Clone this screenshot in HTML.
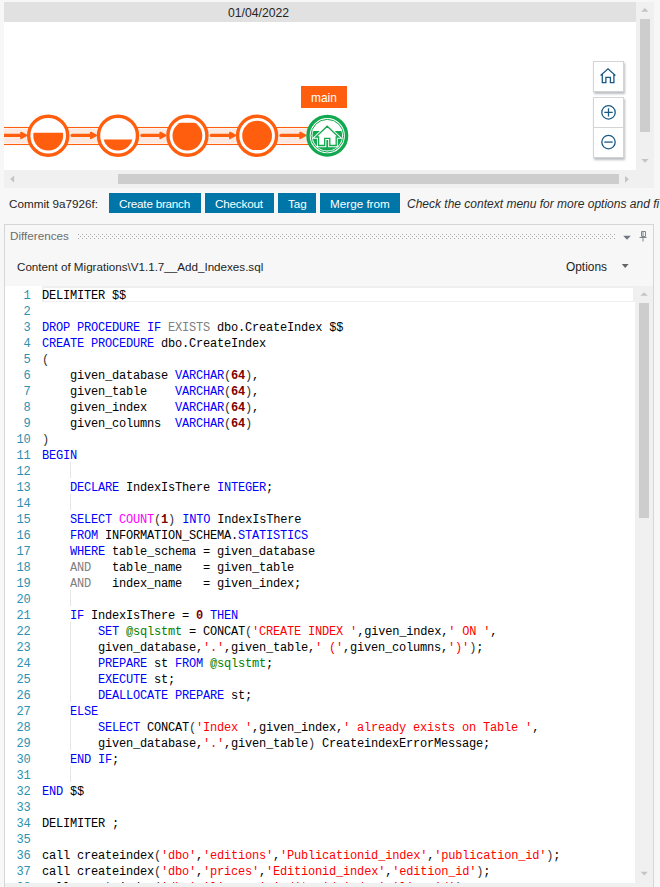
<!DOCTYPE html>
<html><head><meta charset="utf-8">
<style>
*{margin:0;padding:0;box-sizing:border-box}
html,body{width:660px;height:887px;overflow:hidden;background:#f7f7f7;position:relative;font-family:"Liberation Sans",sans-serif;color:#1e1e1e}
.a{position:absolute}
.t{position:absolute;white-space:pre;line-height:1}
#datebar{left:4px;top:2px;width:632px;height:20px;background:#e1e1e1}
#graph{left:4px;top:22px;width:632px;height:148px;background:#fff;overflow:hidden}
#vs1{left:636px;top:2px;width:18px;height:186px;background:#f0f0f0}
#hs1{left:4px;top:170px;width:632px;height:18px;background:#f0f0f0}
.thumb{position:absolute;background:#cdcdcd}
.btn{position:absolute;top:193px;height:20px;background:#0076a8;color:#fff}
.btn span{position:absolute;white-space:pre;line-height:1;font-size:11.6px}
#panel{left:4px;top:224px;width:650px;height:680px;border:1px solid #d6d6d6;background:#f7f7f7}
#code{left:5px;top:286px;width:630px;height:597px;background:#fff;overflow:hidden}
#vs2{left:635px;top:286px;width:18px;height:597px;background:#f0f0f0}
#hs2{left:5px;top:883px;width:648px;height:10px;background:#f0f0f0}
.ln{position:absolute;top:1.5px;left:0;width:25.5px;text-align:right;font-family:"Liberation Mono",monospace;font-size:12px;letter-spacing:-0.2px;color:#2b91af;white-space:pre}
.cl{position:absolute;top:1.5px;left:37px;font-family:"Liberation Mono",monospace;font-size:12px;letter-spacing:-0.2px;color:#000;white-space:pre}
.k{color:#0000ff}.g{color:#808080}.m{color:#ff00ff}.n{color:#800000;font-weight:bold}.s{color:#ff0000}.v{color:#008000}.p{color:#333}
.row{position:absolute;left:0;height:16px;width:629px;line-height:16px}
b{font-weight:normal}
.guide{position:absolute;left:65px;width:1px;background:#e6e6e6}
</style></head><body>
<div id="datebar" class="a"><div class="t" style="left:224px;top:5px;font-size:12.2px;color:#262626">01/04/2022</div></div>
<div id="graph" class="a"></div>
<!--GRAPH-->
<svg class="a" style="left:0;top:0" width="660" height="190" viewBox="0 0 660 190">
<defs><clipPath id="gc"><rect x="4" y="22" width="632" height="148"/></clipPath></defs>
<g clip-path="url(#gc)">
<rect x="3" y="127.5" width="325" height="17" fill="#fde9df" stroke="#ff5e0e" stroke-width="1.1"/>
<rect x="3" y="128.5" width="325" height="15" fill="none" stroke="#fff6f1" stroke-width="0.8"/>
<line x1="0" y1="135.4" x2="22.900000000000002" y2="135.4" stroke="#ff5e0e" stroke-width="3.3" stroke-linecap="round"/>
<path d="M21.1 132.6 L26.3 135.4 L21.1 138.2 Z" fill="#ff5e0e" stroke="#ff5e0e" stroke-width="1.8" stroke-linejoin="round"/>
<line x1="72.2" y1="135.4" x2="92.7" y2="135.4" stroke="#ff5e0e" stroke-width="3.3" stroke-linecap="round"/>
<path d="M90.9 132.6 L96.1 135.4 L90.9 138.2 Z" fill="#ff5e0e" stroke="#ff5e0e" stroke-width="1.8" stroke-linejoin="round"/>
<line x1="142.0" y1="135.4" x2="162.1" y2="135.4" stroke="#ff5e0e" stroke-width="3.3" stroke-linecap="round"/>
<path d="M160.3 132.6 L165.5 135.4 L160.3 138.2 Z" fill="#ff5e0e" stroke="#ff5e0e" stroke-width="1.8" stroke-linejoin="round"/>
<line x1="211.4" y1="135.4" x2="231.8" y2="135.4" stroke="#ff5e0e" stroke-width="3.3" stroke-linecap="round"/>
<path d="M230.0 132.6 L235.2 135.4 L230.0 138.2 Z" fill="#ff5e0e" stroke="#ff5e0e" stroke-width="1.8" stroke-linejoin="round"/>
<line x1="281.1" y1="135.4" x2="302.0" y2="135.4" stroke="#ff5e0e" stroke-width="3.3" stroke-linecap="round"/>
<path d="M300.2 132.6 L305.4 135.4 L300.2 138.2 Z" fill="#ff5e0e" stroke="#ff5e0e" stroke-width="1.8" stroke-linejoin="round"/>
<clipPath id="f0"><rect x="28.200000000000003" y="132.7" width="40" height="40"/></clipPath>
<circle cx="48.2" cy="135.7" r="19.5" fill="#fff" stroke="#ff5e0e" stroke-width="3.4"/>
<circle cx="48.2" cy="135.7" r="14.9" fill="#ff5e0e" clip-path="url(#f0)"/>
<clipPath id="f1"><rect x="98" y="139.4" width="40" height="40"/></clipPath>
<circle cx="118" cy="135.7" r="19.5" fill="#fff" stroke="#ff5e0e" stroke-width="3.4"/>
<circle cx="118" cy="135.7" r="14.9" fill="#ff5e0e" clip-path="url(#f1)"/>
<clipPath id="f2"><rect x="167.4" y="122.7" width="40" height="40"/></clipPath>
<circle cx="187.4" cy="135.7" r="19.5" fill="#fff" stroke="#ff5e0e" stroke-width="3.4"/>
<circle cx="187.4" cy="135.7" r="14.9" fill="#ff5e0e" clip-path="url(#f2)"/>
<clipPath id="f3"><rect x="237.10000000000002" y="110" width="40" height="40"/></clipPath>
<circle cx="257.1" cy="135.7" r="19.5" fill="#fff" stroke="#ff5e0e" stroke-width="3.4"/>
<circle cx="257.1" cy="135.7" r="14.9" fill="#ff5e0e" clip-path="url(#f3)"/>
<clipPath id="fg"><rect x="307.3" y="131" width="40" height="40"/></clipPath>
<circle cx="327.3" cy="135.7" r="19.3" fill="#fff" stroke="#11a84f" stroke-width="3.4"/>
<circle cx="327.3" cy="135.7" r="16.3" fill="none" stroke="#11a84f" stroke-width="1"/>
<circle cx="327.3" cy="135.7" r="14.8" fill="#11a84f" clip-path="url(#fg)"/>
<path d="M327.2 126.2 L338.6 137 L336.2 137 L336.2 145.5 L329.8 145.5 L329.8 138.3 L324.7 138.3 L324.7 145.5 L318.6 145.5 L318.6 137 L315.8 137 Z" fill="#fff" stroke="#fff" stroke-width="3.3" stroke-linejoin="miter"/>
<path d="M327.2 126.2 L338.6 137 L336.2 137 L336.2 145.5 L329.8 145.5 L329.8 138.3 L324.7 138.3 L324.7 145.5 L318.6 145.5 L318.6 137 L315.8 137 Z" fill="#fff" stroke="#11a84f" stroke-width="1.3" stroke-linejoin="miter"/>
</g>
<rect x="301" y="86" width="46" height="22" fill="#ff5e0e"/>
</svg>
<!--/GRAPH-->
<div class="t" style="left:311px;top:93px;font-size:11.9px;color:#fff">main</div>
<div class="a" style="left:593px;top:61px;width:31px;height:31px;background:#fff;border:1px solid #d4d4d4;box-shadow:1px 2px 2px rgba(60,70,80,.35)"></div>
<div class="a" style="left:593px;top:97px;width:31px;height:61px;background:#fff;border:1px solid #d4d4d4;box-shadow:1px 2px 2px rgba(60,70,80,.35)"></div>
<div class="a" style="left:594px;top:127px;width:29px;height:1px;background:#d4d4d4"></div>
<svg class="a" style="left:0;top:0" width="660" height="190">
<path d="M600.6 75.4 L608 68.8 L615.4 75.4 M602.3 74 L602.3 82.6 L605.9 82.6 L605.9 77.4 L610.4 77.4 L610.4 82.6 L613.9 82.6 L613.9 74" fill="none" stroke="#1b5a85" stroke-width="1.3"/>
<circle cx="608.5" cy="112.4" r="6.7" fill="none" stroke="#1b5a85" stroke-width="1.3"/>
<path d="M604.3 112.4 H612.7 M608.5 108.2 V116.6" stroke="#1b5a85" stroke-width="1.3"/>
<circle cx="608.5" cy="142.1" r="6.7" fill="none" stroke="#1b5a85" stroke-width="1.3"/>
<path d="M604.3 142.1 H612.7" stroke="#1b5a85" stroke-width="1.3"/>
</svg>
<div id="vs1" class="a"></div>
<div id="hs1" class="a"></div>

<div class="t" style="left:9px;top:198px;font-size:11.7px">Commit 9a7926f:</div>
<div class="btn" style="left:109px;width:92px"><span style="left:10px;top:5px;font-size:11.7px;letter-spacing:-0.24px">Create branch</span></div>
<div class="btn" style="left:205px;width:69px"><span style="left:10px;top:5px;font-size:11.7px;letter-spacing:-0.2px">Checkout</span></div>
<div class="btn" style="left:278px;width:38px"><span style="left:10px;top:5px;font-size:11.7px">Tag</span></div>
<div class="btn" style="left:320px;width:80px"><span style="left:10px;top:5px;font-size:11.7px">Merge from</span></div>
<div class="t" style="left:407px;top:198px;font-size:12px;font-style:italic;color:#2a2a2a">Check the context menu for more options and fi</div>

<div id="panel" class="a"></div>
<svg class="a" style="left:0;top:0" width="660" height="300">
<defs><pattern id="dots" x="78" y="234" width="4" height="4" patternUnits="userSpaceOnUse"><rect x="0" y="0" width="1" height="1" fill="#a8a8a8"/><rect x="2" y="2" width="1" height="1" fill="#a8a8a8"/></pattern></defs>
<rect x="78" y="234" width="537" height="5" fill="url(#dots)"/>
<path d="M623.2 235.8 L630.8 235.8 L627 239.8 Z" fill="#6f7882"/>
<path d="M641.5 231.5 H645.5 V236.5 H641.5 Z M643 231.5 V236.5 M639.5 237.5 H646.5 M643 237.5 V241.5" fill="none" stroke="#7d868f" stroke-width="1"/>
<path d="M621.8 264 L628.6 264 L625.2 268 Z" fill="#666"/>
</svg>
<div class="t" style="left:10px;top:230px;font-size:11.7px;color:#6d6d6d">Differences</div>
<div class="t" style="left:17px;top:261px;font-size:11.64px">Content of Migrations\V1.1.7__Add_Indexes.sql</div>
<div class="t" style="left:566px;top:262px;font-size:11.9px">Options</div>

<div id="code" class="a">
<div class="a" style="left:37px;top:0;width:593px;height:16px;border:2px solid #efefef;border-bottom-width:1.5px"></div>
<div class="guide" style="top:176px;height:16px"></div>
<div class="guide" style="top:208px;height:16px"></div>
<div class="guide" style="top:304px;height:16px"></div>
<div class="guide" style="top:336px;height:16px"></div>
<div class="guide" style="top:352px;height:16px"></div>
<div class="guide" style="top:368px;height:16px"></div>
<div class="guide" style="top:384px;height:16px"></div>
<div class="guide" style="top:400px;height:16px"></div>
<div class="guide" style="top:432px;height:16px"></div>
<div class="guide" style="top:448px;height:16px"></div>
<div class="guide" style="top:480px;height:16px"></div>
<div class="row" style="top:0px"><span class="ln">1</span><span class="cl">DELIMITER $$</span></div>
<div class="row" style="top:16px"><span class="ln">2</span><span class="cl"></span></div>
<div class="row" style="top:32px"><span class="ln">3</span><span class="cl"><b class="k">DROP</b> <b class="k">PROCEDURE</b> <b class="k">IF</b> <b class="g">EXISTS</b> dbo.CreateIndex $$</span></div>
<div class="row" style="top:48px"><span class="ln">4</span><span class="cl"><b class="k">CREATE</b> <b class="k">PROCEDURE</b> dbo.CreateIndex</span></div>
<div class="row" style="top:64px"><span class="ln">5</span><span class="cl"><b class="p">(</b></span></div>
<div class="row" style="top:80px"><span class="ln">6</span><span class="cl">    given_database <b class="k">VARCHAR</b><b class="p">(</b><b class="n">64</b><b class="p">)</b>,</span></div>
<div class="row" style="top:96px"><span class="ln">7</span><span class="cl">    given_table    <b class="k">VARCHAR</b><b class="p">(</b><b class="n">64</b><b class="p">)</b>,</span></div>
<div class="row" style="top:112px"><span class="ln">8</span><span class="cl">    given_index    <b class="k">VARCHAR</b><b class="p">(</b><b class="n">64</b><b class="p">)</b>,</span></div>
<div class="row" style="top:128px"><span class="ln">9</span><span class="cl">    given_columns  <b class="k">VARCHAR</b><b class="p">(</b><b class="n">64</b><b class="p">)</b></span></div>
<div class="row" style="top:144px"><span class="ln">10</span><span class="cl"><b class="p">)</b></span></div>
<div class="row" style="top:160px"><span class="ln">11</span><span class="cl"><b class="k">BEGIN</b></span></div>
<div class="row" style="top:176px"><span class="ln">12</span><span class="cl"></span></div>
<div class="row" style="top:192px"><span class="ln">13</span><span class="cl">    <b class="k">DECLARE</b> IndexIsThere <b class="k">INTEGER</b>;</span></div>
<div class="row" style="top:208px"><span class="ln">14</span><span class="cl"></span></div>
<div class="row" style="top:224px"><span class="ln">15</span><span class="cl">    <b class="k">SELECT</b> <b class="m">COUNT</b><b class="p">(</b><b class="n">1</b><b class="p">)</b> <b class="k">INTO</b> IndexIsThere</span></div>
<div class="row" style="top:240px"><span class="ln">16</span><span class="cl">    <b class="k">FROM</b> INFORMATION_SCHEMA.<b class="k">STATISTICS</b></span></div>
<div class="row" style="top:256px"><span class="ln">17</span><span class="cl">    <b class="k">WHERE</b> table_schema = given_database</span></div>
<div class="row" style="top:272px"><span class="ln">18</span><span class="cl">    <b class="g">AND</b>   table_name   = given_table</span></div>
<div class="row" style="top:288px"><span class="ln">19</span><span class="cl">    <b class="g">AND</b>   index_name   = given_index;</span></div>
<div class="row" style="top:304px"><span class="ln">20</span><span class="cl"></span></div>
<div class="row" style="top:320px"><span class="ln">21</span><span class="cl">    <b class="k">IF</b> IndexIsThere = <b class="n">0</b> <b class="k">THEN</b></span></div>
<div class="row" style="top:336px"><span class="ln">22</span><span class="cl">        <b class="k">SET</b> <b class="v">@sqlstmt</b> = CONCAT<b class="p">(</b><b class="s">&#x27;CREATE INDEX &#x27;</b>,given_index,<b class="s">&#x27; ON &#x27;</b>,</span></div>
<div class="row" style="top:352px"><span class="ln">23</span><span class="cl">        given_database,<b class="s">&#x27;.&#x27;</b>,given_table,<b class="s">&#x27; (&#x27;</b>,given_columns,<b class="s">&#x27;)&#x27;</b><b class="p">)</b>;</span></div>
<div class="row" style="top:368px"><span class="ln">24</span><span class="cl">        <b class="k">PREPARE</b> st <b class="k">FROM</b> <b class="v">@sqlstmt</b>;</span></div>
<div class="row" style="top:384px"><span class="ln">25</span><span class="cl">        <b class="k">EXECUTE</b> st;</span></div>
<div class="row" style="top:400px"><span class="ln">26</span><span class="cl">        <b class="k">DEALLOCATE</b> <b class="k">PREPARE</b> st;</span></div>
<div class="row" style="top:416px"><span class="ln">27</span><span class="cl">    <b class="k">ELSE</b></span></div>
<div class="row" style="top:432px"><span class="ln">28</span><span class="cl">        <b class="k">SELECT</b> CONCAT<b class="p">(</b><b class="s">&#x27;Index &#x27;</b>,given_index,<b class="s">&#x27; already exists on Table &#x27;</b>,</span></div>
<div class="row" style="top:448px"><span class="ln">29</span><span class="cl">        given_database,<b class="s">&#x27;.&#x27;</b>,given_table<b class="p">)</b> CreateindexErrorMessage;</span></div>
<div class="row" style="top:464px"><span class="ln">30</span><span class="cl">    <b class="k">END</b> <b class="k">IF</b>;</span></div>
<div class="row" style="top:480px"><span class="ln">31</span><span class="cl"></span></div>
<div class="row" style="top:496px"><span class="ln">32</span><span class="cl"><b class="k">END</b> $$</span></div>
<div class="row" style="top:512px"><span class="ln">33</span><span class="cl"></span></div>
<div class="row" style="top:528px"><span class="ln">34</span><span class="cl">DELIMITER ;</span></div>
<div class="row" style="top:544px"><span class="ln">35</span><span class="cl"></span></div>
<div class="row" style="top:560px"><span class="ln">36</span><span class="cl">call createindex<b class="p">(</b><b class="s">&#x27;dbo&#x27;</b>,<b class="s">&#x27;editions&#x27;</b>,<b class="s">&#x27;Publicationid_index&#x27;</b>,<b class="s">&#x27;publication_id&#x27;</b><b class="p">)</b>;</span></div>
<div class="row" style="top:576px"><span class="ln">37</span><span class="cl">call createindex<b class="p">(</b><b class="s">&#x27;dbo&#x27;</b>,<b class="s">&#x27;prices&#x27;</b>,<b class="s">&#x27;Editionid_index&#x27;</b>,<b class="s">&#x27;edition_id&#x27;</b><b class="p">)</b>;</span></div>
<div class="row" style="top:592px"><span class="ln">38</span><span class="cl">call createindex<b class="p">(</b><b class="s">&#x27;dbo&#x27;</b>,<b class="s">&#x27;lineups&#x27;</b>,<b class="s">&#x27;editorid_index&#x27;</b>,<b class="s">&#x27;lineuid&#x27;</b><b class="p">)</b>;</span></div>
</div>
<div id="vs2" class="a"></div>
<div id="hs2" class="a"></div>
<div class="thumb" style="left:640px;top:19px;width:10px;height:113px"></div>
<div class="thumb" style="left:118px;top:174px;width:501px;height:10px"></div>
<svg class="a" style="left:0;top:0" width="660" height="887">
<path d="M641.2 11.8 L644.8 7.9 L648.5 11.8 Z" fill="#c4c4c4"/>
<path d="M641.4 159 L645 162.8 L648.6 159 Z" fill="#c4c4c4"/>
<path d="M14.1 175.5 L10.2 179.1 L14.1 182.7 Z" fill="#c4c4c4"/>
<path d="M625 175.9 L628.9 179.3 L625 182.7 Z" fill="#c4c4c4"/>
<path d="M640.4 295.8 L644.1 292.2 L647.8 295.8 Z" fill="#c4c4c4"/>
<path d="M640.6 871.8 L644.2 875.5 L647.8 871.8 Z" fill="#c4c4c4"/>
</svg>
<div class="thumb" style="left:639px;top:303px;width:10px;height:215px"></div>
</body></html>
